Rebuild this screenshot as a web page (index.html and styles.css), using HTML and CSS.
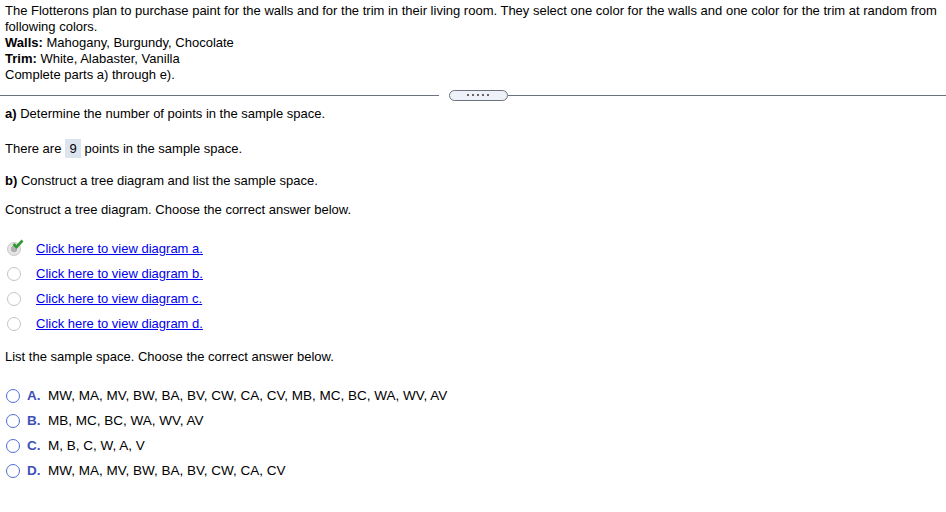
FILE: index.html
```html
<!DOCTYPE html>
<html>
<head>
<meta charset="utf-8">
<link rel="stylesheet" href="styles.css">
</head>
<body>
<div class="intro">
  <p>The Flotterons plan to purchase paint for the walls and for the trim in their living room. They select one color for the walls and one color for the trim at random from following colors.</p>
  <p><b>Walls:</b> Mahogany, Burgundy, Chocolate</p>
  <p><b>Trim:</b> White, Alabaster, Vanilla</p>
  <p>Complete parts a) through e).</p>
</div>
<div class="divider">
  <span class="line"></span>
  <span class="pill"><i></i><i></i><i></i><i></i><i></i></span>
  <span class="line"></span>
</div>
<div class="content">
  <p class="q1"><b>a)</b> Determine the number of points in the sample space.</p>
  <p class="ans">There are <span class="box">9</span> points in the sample space.</p>
  <p class="q2"><b>b)</b> Construct a tree diagram and list the sample space.</p>
  <p class="q3">Construct a tree diagram. Choose the correct answer below.</p>
  <ul class="diagrams">
    <li><span class="gradio checked"><svg class="check" width="12" height="10" viewBox="0 0 12 10"><path d="M1.5 5 L4.5 8 L10.5 1.5" fill="none" stroke="#2e9a2e" stroke-width="2.6"/></svg></span><a href="#">Click here to view diagram a.</a></li>
    <li><span class="gradio"></span><a href="#">Click here to view diagram b.</a></li>
    <li><span class="gradio"></span><a href="#">Click here to view diagram c.</a></li>
    <li><span class="gradio"></span><a href="#">Click here to view diagram d.</a></li>
  </ul>
  <p class="q4">List the sample space. Choose the correct answer below.</p>
  <ul class="choices">
    <li><span class="bradio"></span><span class="letter">A.</span><span class="txt">MW, MA, MV, BW, BA, BV, CW, CA, CV, MB, MC, BC, WA, WV, AV</span></li>
    <li><span class="bradio"></span><span class="letter">B.</span><span class="txt">MB, MC, BC, WA, WV, AV</span></li>
    <li><span class="bradio"></span><span class="letter">C.</span><span class="txt">M, B, C, W, A, V</span></li>
    <li><span class="bradio"></span><span class="letter">D.</span><span class="txt">MW, MA, MV, BW, BA, BV, CW, CA, CV</span></li>
  </ul>
</div>
</body>
</html>
```
FILE: styles.css
```css
html, body {
  margin: 0;
  padding: 0;
  background: #fff;
}
body {
  font-family: "Liberation Sans", Arial, sans-serif;
  font-size: 13px;
  line-height: 16px;
  color: #000;
}
p { margin: 0; }
.intro {
  padding: 3px 5px 0 5px;
}
.divider {
  display: flex;
  align-items: center;
  margin-top: 6px;
  height: 12px;
}
.divider .line {
  flex: 1;
  height: 1px;
  background: #6b7280;
}
.pill {
  box-sizing: border-box;
  width: 59px;
  height: 11px;
  margin-left: 10px;
  border: 1px solid #6b7280;
  border-radius: 6px;
  background: #eef2f8;
  display: flex;
  justify-content: center;
  align-items: center;
  gap: 3px;
}
.pill i {
  width: 2px;
  height: 2px;
  background: #666;
}
.content {
  padding: 0 5px;
}
.q1 { margin-top: 5px; }
.ans { margin-top: 17px; display: flex; align-items: center; height: 19px; }
.box {
  display: inline-block;
  background: #dce4ef;
  padding: 0 4px;
  height: 19px;
  line-height: 19px;
  margin: 0 4px;
}
.q2 { margin-top: 15px; }
.q3 { margin-top: 13px; }
ul { list-style: none; margin: 0; padding: 0; }
.diagrams { margin-top: 18px; }
.diagrams li {
  display: flex;
  align-items: center;
  height: 25px;
}
.gradio {
  position: relative;
  box-sizing: border-box;
  width: 14px;
  height: 14px;
  border: 1px solid #c4c4c4;
  border-radius: 50%;
  margin-left: 2px;
  margin-right: 15px;
  background: #fff;
}
.gradio.checked {
  background: radial-gradient(circle, #b0b0b0 0 3px, #e4e4e4 3.5px);
  border-color: #c8c8c8;
}
.check {
  position: absolute;
  left: 4px;
  top: -4px;
}
.diagrams a {
  color: #0000ee;
  text-decoration: underline;
}
.q4 { margin-top: 13px; }
.choices { margin-top: 18px; }
.choices li {
  display: flex;
  align-items: center;
  height: 25px;
}
.bradio {
  box-sizing: border-box;
  width: 14px;
  height: 14px;
  border: 1.5px solid #4f6fd6;
  border-radius: 50%;
  margin-left: 1px;
  margin-right: 7px;
}
.letter {
  color: #3d4fb8;
  font-weight: bold;
  width: 21px;
  font-size: 13.5px;
}
.txt {
  font-size: 13.5px;
}
```
